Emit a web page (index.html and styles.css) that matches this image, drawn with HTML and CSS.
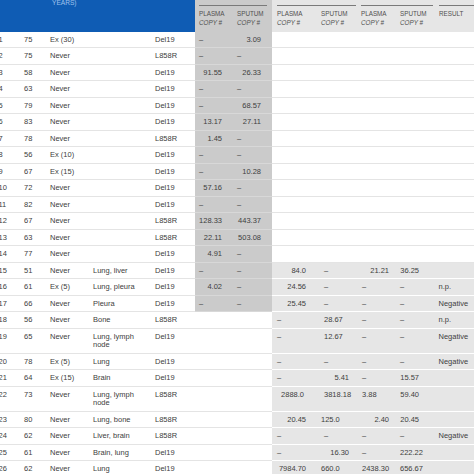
FILE: index.html
```html
<!DOCTYPE html>
<html>
<head>
<meta charset="utf-8">
<link rel="stylesheet" href="styles.css">
</head>
<body>
<div class="frame">
<table class="tbl">
<colgroup>
<col class="w0"><col class="w1"><col class="w2"><col class="w3"><col class="w4"><col class="w5"><col class="w6"><col class="w7"><col class="w8"><col class="w9"><col class="w10"><col class="w11">
</colgroup>
<thead>
<tr class="grp">
<th class="blue" rowspan="2"></th>
<th class="blue" rowspan="2"></th>
<th class="blue" rowspan="2"><div class="cut">YEARS)</div></th>
<th class="blue" rowspan="2"></th>
<th class="blue" rowspan="2"></th>
<th class="dark" colspan="2"><div class="rule r1"></div></th>
<th class="light" colspan="2"><div class="rule r2"></div></th>
<th class="light" colspan="2"><div class="rule r3"></div></th>
<th class="light"><div class="rule r4"></div></th>
</tr>
<tr class="lbl">
<th class="dark c6">PLASMA<br><i>COPY #</i></th>
<th class="dark c7">SPUTUM<br><i>COPY #</i></th>
<th class="light c8">PLASMA<br><i>COPY #</i></th>
<th class="light c9">SPUTUM<br><i>COPY #</i></th>
<th class="light c10">PLASMA<br><i>COPY #</i></th>
<th class="light c11">SPUTUM<br><i>COPY #</i></th>
<th class="light c12">RESULT</th>
</tr>
</thead>
<tbody>
<tr class="g"><td>1</td><td>75</td><td>Ex (30)</td><td></td><td>Del19</td><td>–</td><td class="n">3.09</td><td></td><td></td><td></td><td></td><td></td></tr>
<tr class="g"><td>2</td><td>75</td><td>Never</td><td></td><td>L858R</td><td>–</td><td>–</td><td></td><td></td><td></td><td></td><td></td></tr>
<tr class="g"><td>3</td><td>58</td><td>Never</td><td></td><td>Del19</td><td class="n">91.55</td><td class="n">26.33</td><td></td><td></td><td></td><td></td><td></td></tr>
<tr class="g"><td>4</td><td>63</td><td>Never</td><td></td><td>Del19</td><td>–</td><td>–</td><td></td><td></td><td></td><td></td><td></td></tr>
<tr class="g"><td>5</td><td>79</td><td>Never</td><td></td><td>Del19</td><td>–</td><td class="n">68.57</td><td></td><td></td><td></td><td></td><td></td></tr>
<tr class="g"><td>6</td><td>83</td><td>Never</td><td></td><td>Del19</td><td class="n">13.17</td><td class="n">27.11</td><td></td><td></td><td></td><td></td><td></td></tr>
<tr class="g"><td>7</td><td>78</td><td>Never</td><td></td><td>L858R</td><td class="n">1.45</td><td>–</td><td></td><td></td><td></td><td></td><td></td></tr>
<tr class="g"><td>8</td><td>56</td><td>Ex (10)</td><td></td><td>Del19</td><td>–</td><td>–</td><td></td><td></td><td></td><td></td><td></td></tr>
<tr class="g"><td>9</td><td>67</td><td>Ex (15)</td><td></td><td>Del19</td><td>–</td><td class="n">10.28</td><td></td><td></td><td></td><td></td><td></td></tr>
<tr class="g"><td>10</td><td>72</td><td>Never</td><td></td><td>Del19</td><td class="n">57.16</td><td>–</td><td></td><td></td><td></td><td></td><td></td></tr>
<tr class="g"><td>11</td><td>82</td><td>Never</td><td></td><td>Del19</td><td>–</td><td>–</td><td></td><td></td><td></td><td></td><td></td></tr>
<tr class="g"><td>12</td><td>67</td><td>Never</td><td></td><td>L858R</td><td class="n">128.33</td><td class="n">443.37</td><td></td><td></td><td></td><td></td><td></td></tr>
<tr class="g"><td>13</td><td>63</td><td>Never</td><td></td><td>L858R</td><td class="n">22.11</td><td class="n">503.08</td><td></td><td></td><td></td><td></td><td></td></tr>
<tr class="g"><td>14</td><td>77</td><td>Never</td><td></td><td>Del19</td><td class="n">4.91</td><td>–</td><td></td><td></td><td></td><td></td><td></td></tr>
<tr class="g h"><td>15</td><td>51</td><td>Never</td><td>Lung, liver</td><td>Del19</td><td>–</td><td>–</td><td class="n">84.0</td><td>–</td><td class="n">21.21</td><td class="n">36.25</td><td></td></tr>
<tr class="g h"><td>16</td><td>61</td><td>Ex (5)</td><td>Lung, pleura</td><td>Del19</td><td class="n">4.02</td><td>–</td><td class="n">24.56</td><td>–</td><td>–</td><td>–</td><td>n.p.</td></tr>
<tr class="g h"><td>17</td><td>66</td><td>Never</td><td>Pleura</td><td>Del19</td><td>–</td><td>–</td><td class="n">25.45</td><td>–</td><td>–</td><td>–</td><td>Negative</td></tr>
<tr class="h"><td>18</td><td>56</td><td>Never</td><td>Bone</td><td>L858R</td><td></td><td></td><td>–</td><td class="n alt">28.67</td><td>–</td><td>–</td><td>n.p.</td></tr>
<tr class="h"><td>19</td><td>65</td><td>Never</td><td>Lung, lymph node</td><td>Del19</td><td></td><td></td><td>–</td><td class="n alt">12.67</td><td>–</td><td>–</td><td>Negative</td></tr>
<tr class="h"><td>20</td><td>78</td><td>Ex (5)</td><td>Lung</td><td>Del19</td><td></td><td></td><td>–</td><td>–</td><td>–</td><td>–</td><td>Negative</td></tr>
<tr class="h"><td>21</td><td>64</td><td>Ex (15)</td><td>Brain</td><td>Del19</td><td></td><td></td><td>–</td><td class="n">5.41</td><td>–</td><td class="n">15.57</td><td></td></tr>
<tr class="h"><td>22</td><td>73</td><td>Never</td><td>Lung, lymph node</td><td>L858R</td><td></td><td></td><td class="n wide">2888.0</td><td class="n">3818.18</td><td class="l">3.88</td><td class="n">59.40</td><td></td></tr>
<tr class="h"><td>23</td><td>80</td><td>Never</td><td>Lung, bone</td><td>L858R</td><td></td><td></td><td class="n">20.45</td><td class="l">125.0</td><td class="n">2.40</td><td class="n">20.45</td><td></td></tr>
<tr class="h"><td>24</td><td>62</td><td>Never</td><td>Liver, brain</td><td>L858R</td><td></td><td></td><td>–</td><td>–</td><td>–</td><td>–</td><td>Negative</td></tr>
<tr class="h"><td>25</td><td>61</td><td>Never</td><td>Brain, lung</td><td>Del19</td><td></td><td></td><td>–</td><td class="n">16.30</td><td>–</td><td class="n">222.22</td><td></td></tr>
<tr class="h"><td>26</td><td>62</td><td>Never</td><td>Lung</td><td>Del19</td><td></td><td></td><td class="n">7984.70</td><td class="l">660.0</td><td class="n">2438.30</td><td class="n">656.67</td><td></td></tr>
</tbody>
</table>
</div>
</body>
</html>
```

FILE: styles.css
```css
html, body {
  margin: 0;
  padding: 0;
  background: #ffffff;
}

.frame {
  width: 474px;
  height: 474px;
  overflow: hidden;
}

.tbl {
  border-collapse: collapse;
  table-layout: fixed;
  width: 480px;
  font-family: "Liberation Sans", Arial, sans-serif;
  font-size: 7.5px;
  color: #404040;
}

.w0 { width: 24px; }
.w1 { width: 26px; }
.w2 { width: 43px; }
.w3 { width: 62px; }
.w4 { width: 40px; }
.w5 { width: 42px; }
.w6 { width: 35px; }
.w7 { width: 49px; }
.w8 { width: 40px; }
.w9 { width: 39px; }
.w10 { width: 38px; }
.w11 { width: 42px; }

.tbl th,
.tbl td {
  padding: 0;
  text-align: left;
  vertical-align: top;
  font-weight: normal;
}

/* header */
.grp th {
  padding-top: 5px;
  vertical-align: top;
  line-height: 0;
  font-size: 0;
}

.grp th.blue {
  padding-top: 0;
  background: #0f5cb4;
  color: #9fc2ec;
  font-size: 6.6px;
  line-height: 8px;
  vertical-align: top;
}

.cut {
  margin-top: -1.5px;
  padding-left: 2px;
}

.dark { background: #cbcbcb; }
.light { background: #e6e6e6; }

.rule {
  height: 1px;
  background: #7a7a7a;
}

.r1 { margin: 0 5px 0 4px; }
.r2 { margin: 0 5px 0 5px; }
.r3 { margin: 0 5px 0 0; }
.r4 { margin: 0 0 0 1px; }

.lbl th {
  padding-top: 3px;
  padding-bottom: 4.75px;
  font-size: 6.3px;
  line-height: 9px;
  color: #505050;
}

.lbl i { font-style: italic; }

.lbl .c6 { padding-left: 4px; }
.lbl .c7 { padding-left: 0; }
.lbl .c8 { padding-left: 5px; }
.lbl .c9 { padding-left: 0; }
.lbl .c10 { padding-left: 0; }
.lbl .c11 { padding-left: 0; }
.lbl .c12 { padding-left: 1px; }

/* body */
.tbl tbody td {
  padding-top: 4px;
  padding-bottom: 3px;
  line-height: 8.5px;
  border-bottom: 1px solid #e4e4e4;
}

.tbl tbody td:nth-child(1) { text-indent: -1.5px; }
.tbl tbody td:nth-child(4) { padding-right: 10px; }

.tbl tbody td.n { text-align: right; }

.tbl tbody td:nth-child(6) { padding-left: 4px; }
.tbl tbody td:nth-child(6).n { padding-right: 15px; }

.tbl tbody td:nth-child(7).n { padding-right: 11px; }

.tbl tbody td:nth-child(8) { padding-left: 5px; }
.tbl tbody td:nth-child(8).n { padding-right: 15px; }
.tbl tbody td:nth-child(8).n.wide { padding-right: 17px; }

.tbl tbody td:nth-child(9) { padding-left: 3px; }
.tbl tbody td:nth-child(9).n { padding-right: 12px; }
.tbl tbody td:nth-child(9).n.alt { padding-right: 20px; }
.tbl tbody td:nth-child(9).l { padding-left: 0; }

.tbl tbody td:nth-child(10) { padding-left: 1px; }
.tbl tbody td:nth-child(10).n { padding-right: 11px; }

.tbl tbody td:nth-child(11).n { padding-right: 19px; }

.tbl tbody td:nth-child(12) { padding-left: 0.5px; }

.tbl tbody tr.g td:nth-child(6),
.tbl tbody tr.g td:nth-child(7) {
  background: #cbcbcb;
  border-bottom-color: #d8d8d8;
}

.tbl tbody tr.h td:nth-child(n+8) {
  background: #e6e6e6;
  border-bottom-color: #ffffff;
}
```
